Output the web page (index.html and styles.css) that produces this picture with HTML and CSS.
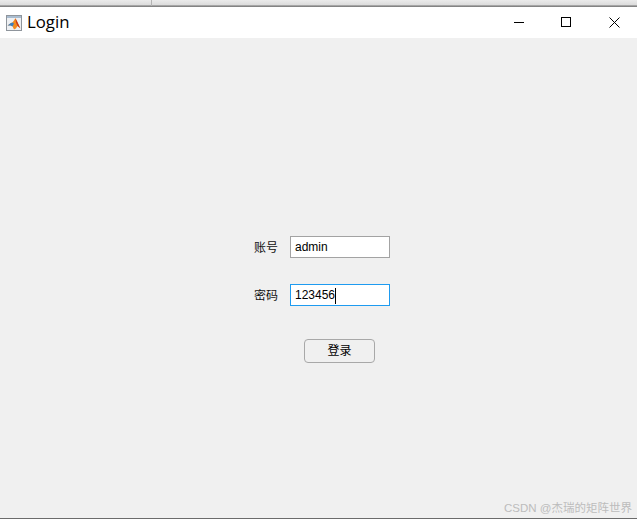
FILE: index.html
```html
<!DOCTYPE html>
<html lang="zh">
<head>
<meta charset="utf-8">
<title>Login</title>
<link rel="stylesheet" href="styles.css">
</head>
<body>
<div class="window">
  <div class="strip"><span class="strip-cell"></span></div>
  <header class="titlebar">
    <svg class="app-icon" width="16" height="16" viewBox="0 0 16 16">
      <rect x="0.5" y="0.5" width="15" height="15" fill="#eef0f3" stroke="#8f959c"/>
      <rect x="1" y="1" width="14" height="2" fill="#a9bccf"/>
      <path d="M1.5 10.5 5 8l1.5-.5L9.500 3.200l1.500 3 3.300 7-2.800-2.200-1.600 2.600-1.900 1-1.500-3.400-2-1z" fill="#f28a1e"/>
      <path d="M1.500 10.500 5 8l1.500-.5L8 8.500 6.500 11.500l-2-1z" fill="#3b7fc0"/>
      <path d="M9.500 3.200 11 6.200l3.300 7-2.800-2.200L10 7.500z" fill="#c8381a"/>
    </svg>
    <span class="title">Login</span>
    <div class="controls">
      <svg class="ctl" width="11" height="11" viewBox="0 0 11 11"><path d="M0 5.500h10" stroke="#000" stroke-width="1"/></svg>
      <svg class="ctl ctl-max" width="11" height="11" viewBox="0 0 11 11"><rect x="0.500" y="0.500" width="9" height="9" fill="none" stroke="#000"/></svg>
      <svg class="ctl" width="11" height="11" viewBox="0 0 11 11"><path d="M0.500 0.500l10 10M10.500 0.500l-10 10" stroke="#000" stroke-width="1"/></svg>
    </div>
  </header>
  <main class="content">
    <form class="form">
      <label class="row"><span class="label">账号</span><span class="input">admin</span></label>
      <label class="row"><span class="label">密码</span><span class="input focused">123456<i class="caret"></i></span></label>
      <div class="actions"><button class="btn" type="button">登录</button></div>
    </form>
    <div class="watermark">CSDN @杰瑞的矩阵世界</div>
  </main>
</div>
</body>
</html>
```
FILE: styles.css
```css
* { box-sizing: border-box; }
html, body { margin: 0; padding: 0; }
body { width: 637px; height: 519px; overflow: hidden; background: #f0f0f0; font-family: "Liberation Sans", "Noto Sans CJK SC", sans-serif; }
.window { width: 637px; height: 519px; display: flex; flex-direction: column; border-bottom: 1px solid #6b6b6b; }
.strip { height: 7px; background: linear-gradient(#ebebeb, #dcdcdc 70%, #7d7d7d 85%, #8a8a8a); padding-left: 151px; }
.strip-cell { display: block; width: 1px; height: 6px; background: #b4b4b4; }
.titlebar { height: 31px; background: #fff; display: flex; align-items: center; padding-left: 6px; }
.app-icon { flex: none; }
.title { margin-left: 5px; margin-top: -2px; font: 16.8px/31px "Open Sans", "Liberation Sans", sans-serif; color: #000; }
.controls { margin-left: auto; display: flex; }
.ctl { margin-right: 36px; }
.ctl-max { margin-right: 37px; }
.ctl:last-child { margin-right: 17px; }
.content { flex: 1; background: #f0f0f0; display: flex; flex-direction: column; padding-top: 198px; }
.form { display: flex; flex-direction: column; padding-left: 254px; gap: 26px; }
.row { display: flex; align-items: center; height: 22px; }
.label { width: 36px; font-size: 12px; color: #111; line-height: 22px; padding-top: 1px; }
.input { width: 100px; height: 22px; background: #fff; border: 1px solid #a3a3a3; font-size: 12px; line-height: 20px; padding-left: 4px; color: #000; display: flex; align-items: center; }
.input.focused { border-color: #1e9bf0; }
.caret { display: block; width: 1px; height: 16px; background: #000; margin-top: 1px; }
.actions { padding-left: 50px; margin-top: 7px; }
.btn { display: block; width: 71px; height: 24px; padding: 1px 0 0; border: 1px solid #a8a8a8; border-radius: 4px; background: #f0f0f0; font: 12px/21px "Liberation Sans", "Noto Sans CJK SC", sans-serif; color: #000; }
.watermark { margin-top: auto; padding: 0 5px 3px 0; text-align: right; font-size: 11.5px; line-height: 14px; color: #bcbcbc; }
```
